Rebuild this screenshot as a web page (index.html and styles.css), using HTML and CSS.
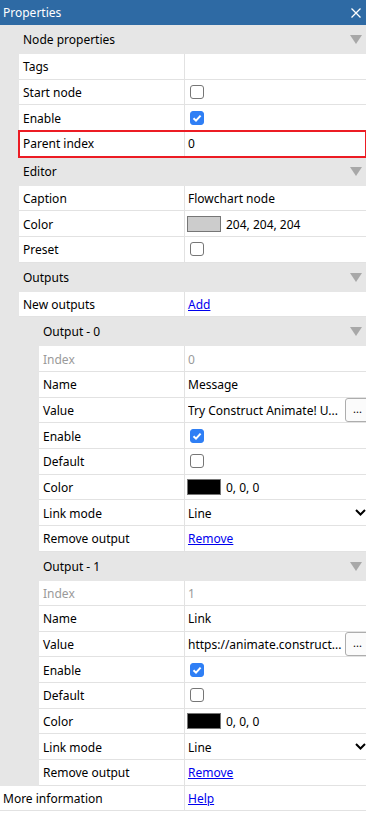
FILE: index.html
```html
<!DOCTYPE html>
<html>
<head>
<meta charset="utf-8">
<link rel="stylesheet" href="styles.css">
</head>
<body>
<div class="panel">
  <div class="title"><span>Properties</span>
    <svg class="close" width="10" height="10" viewBox="0 0 10 10"><path d="M0.5 0.5 L9.5 9.5 M9.5 0.5 L0.5 9.5" stroke="#fff" stroke-width="1.3" fill="none"/></svg>
  </div>

  <div class="hdr l1"><span>Node properties</span><svg class="tri" width="12" height="9" viewBox="0 0 12 9"><polygon points="0,0 12,0 6,9"/></svg></div>
  <div class="row l1"><div class="cells"><div class="k">Tags</div><div class="v"></div></div></div>
  <div class="row l1"><div class="cells"><div class="k">Start node</div><div class="v"><span class="cb"></span></div></div></div>
  <div class="row l1"><div class="cells"><div class="k">Enable</div><div class="v"><span class="cb on"><svg width="12" height="12" viewBox="0 0 12 12"><path d="M2.5 6.2 L5 8.6 L9.6 3.6" stroke="#fff" stroke-width="2" fill="none"/></svg></span></div></div></div>
  <div class="row l1 selected"><div class="cells"><div class="k">Parent index</div><div class="v">0</div></div></div>

  <div class="hdr l1"><span>Editor</span><svg class="tri" width="12" height="9" viewBox="0 0 12 9"><polygon points="0,0 12,0 6,9"/></svg></div>
  <div class="row l1"><div class="cells"><div class="k">Caption</div><div class="v">Flowchart node</div></div></div>
  <div class="row l1"><div class="cells"><div class="k">Color</div><div class="v"><span class="sw grey"></span><span>204, 204, 204</span></div></div></div>
  <div class="row l1"><div class="cells"><div class="k">Preset</div><div class="v"><span class="cb"></span></div></div></div>

  <div class="hdr l1"><span>Outputs</span><svg class="tri" width="12" height="9" viewBox="0 0 12 9"><polygon points="0,0 12,0 6,9"/></svg></div>
  <div class="row l1"><div class="cells"><div class="k">New outputs</div><div class="v"><a class="lnk">Add</a></div></div></div>

  <div class="hdr l2"><span>Output - 0</span><svg class="tri" width="12" height="9" viewBox="0 0 12 9"><polygon points="0,0 12,0 6,9"/></svg></div>
  <div class="row l2"><div class="cells"><div class="k dim">Index</div><div class="v dim">0</div></div></div>
  <div class="row l2"><div class="cells"><div class="k">Name</div><div class="v">Message</div></div></div>
  <div class="row l2"><div class="cells"><div class="k">Value</div><div class="v"><span class="txt">Try Construct Animate! U...</span><span class="dots">...</span></div></div></div>
  <div class="row l2"><div class="cells"><div class="k">Enable</div><div class="v"><span class="cb on"><svg width="12" height="12" viewBox="0 0 12 12"><path d="M2.5 6.2 L5 8.6 L9.6 3.6" stroke="#fff" stroke-width="2" fill="none"/></svg></span></div></div></div>
  <div class="row l2"><div class="cells"><div class="k">Default</div><div class="v"><span class="cb"></span></div></div></div>
  <div class="row l2"><div class="cells"><div class="k">Color</div><div class="v"><span class="sw black"></span><span>0, 0, 0</span></div></div></div>
  <div class="row l2"><div class="cells"><div class="k">Link mode</div><div class="v"><span class="txt">Line</span><svg class="chev" width="11" height="7" viewBox="0 0 11 7"><path d="M1 1 L5.5 5.5 L10 1" stroke="#000" stroke-width="2" fill="none"/></svg></div></div></div>
  <div class="row l2"><div class="cells"><div class="k">Remove output</div><div class="v"><a class="lnk">Remove</a></div></div></div>

  <div class="hdr l2"><span>Output - 1</span><svg class="tri" width="12" height="9" viewBox="0 0 12 9"><polygon points="0,0 12,0 6,9"/></svg></div>
  <div class="row l2"><div class="cells"><div class="k dim">Index</div><div class="v dim">1</div></div></div>
  <div class="row l2"><div class="cells"><div class="k">Name</div><div class="v">Link</div></div></div>
  <div class="row l2"><div class="cells"><div class="k">Value</div><div class="v"><span class="txt">https://animate.construct...</span><span class="dots">...</span></div></div></div>
  <div class="row l2"><div class="cells"><div class="k">Enable</div><div class="v"><span class="cb on"><svg width="12" height="12" viewBox="0 0 12 12"><path d="M2.5 6.2 L5 8.6 L9.6 3.6" stroke="#fff" stroke-width="2" fill="none"/></svg></span></div></div></div>
  <div class="row l2"><div class="cells"><div class="k">Default</div><div class="v"><span class="cb"></span></div></div></div>
  <div class="row l2"><div class="cells"><div class="k">Color</div><div class="v"><span class="sw black"></span><span>0, 0, 0</span></div></div></div>
  <div class="row l2"><div class="cells"><div class="k">Link mode</div><div class="v"><span class="txt">Line</span><svg class="chev" width="11" height="7" viewBox="0 0 11 7"><path d="M1 1 L5.5 5.5 L10 1" stroke="#000" stroke-width="2" fill="none"/></svg></div></div></div>
  <div class="row l2"><div class="cells"><div class="k">Remove output</div><div class="v"><a class="lnk">Remove</a></div></div></div>

  <div class="row l0"><div class="cells"><div class="k">More information</div><div class="v"><a class="lnk">Help</a></div></div></div>
</div>
</body>
</html>
```
FILE: styles.css
```css
* { box-sizing: border-box; }
html, body { margin: 0; padding: 0; background: #fff; }
body {
  width: 366px;
  overflow: hidden;
  font-family: "Noto Sans", "Open Sans", sans-serif;
  font-size: 12px;
  color: #000;
}
.title {
  height: 25px;
  background: #2e6aa4;
  color: #fff;
  display: flex;
  align-items: center;
  justify-content: space-between;
  padding: 0 5px 0 3px;
}
.close { display: block; }
.hdr {
  height: 29px;
  background: #e6e6e6;
  display: flex;
  align-items: center;
  justify-content: space-between;
  padding-right: 4px;
}
.hdr.l1 { padding-left: 23px; }
.hdr.l2 { padding-left: 43px; }
.tri { display: block; fill: #a8a8a8; }
.row {
  height: 25.67px;
  background: #e6e6e6;
  display: flex;
}
.row.l1 { padding-left: 19px; }
.row.l2 { padding-left: 39px; }
.cells {
  flex: 1;
  display: flex;
  background: #fff;
  border-bottom: 1px solid #e2e2e2;
  min-width: 0;
}
.selected .cells {
  outline: 2px solid #ec1c24;
  outline-offset: -1px;
}
.k {
  flex: 0 0 auto;
  display: flex;
  align-items: center;
  padding-left: 4px;
  padding-top: 1px;
  border-right: 1px solid #e2e2e2;
  white-space: nowrap;
}
.l0 .k { width: 185px; padding-left: 3px; }
.l1 .k { width: 166px; }
.l2 .k { width: 146px; }
.v {
  flex: 1;
  min-width: 0;
  display: flex;
  align-items: center;
  padding-left: 3px;
  padding-top: 1px;
  overflow: hidden;
  white-space: nowrap;
}
.dim { color: #9a9a9a; }
.cb {
  width: 14px;
  height: 14px;
  margin-left: 2px;
  margin-top: -1px;
  border: 1px solid #767676;
  border-radius: 3px;
  background: #fff;
  display: flex;
  align-items: center;
  justify-content: center;
}
.cb.on { background: #2f7ff5; border-color: #2f7ff5; }
.cb svg { display: block; }
.sw {
  width: 34px;
  height: 16px;
  margin-left: -1px;
  margin-right: 5px;
  margin-top: -1px;
  border: 1px solid #767676;
  flex: 0 0 auto;
}
.sw.grey { background: #cccccc; }
.sw.black { background: #000; }
.txt { flex: 1; min-width: 0; overflow: hidden; }
.dots {
  flex: 0 0 auto;
  width: 25px;
  height: 24px;
  margin-right: -4px;
  margin-top: -1px;
  border: 1px solid #adadad;
  border-radius: 3px;
  background: #fbfbfb;
  display: flex;
  align-items: center;
  justify-content: center;
  padding-bottom: 3px;
  font-size: 11px;
}
.chev { display: block; flex: 0 0 auto; margin-top: -1px; }
.lnk { color: #0000ee; text-decoration: underline; cursor: pointer; }
```
